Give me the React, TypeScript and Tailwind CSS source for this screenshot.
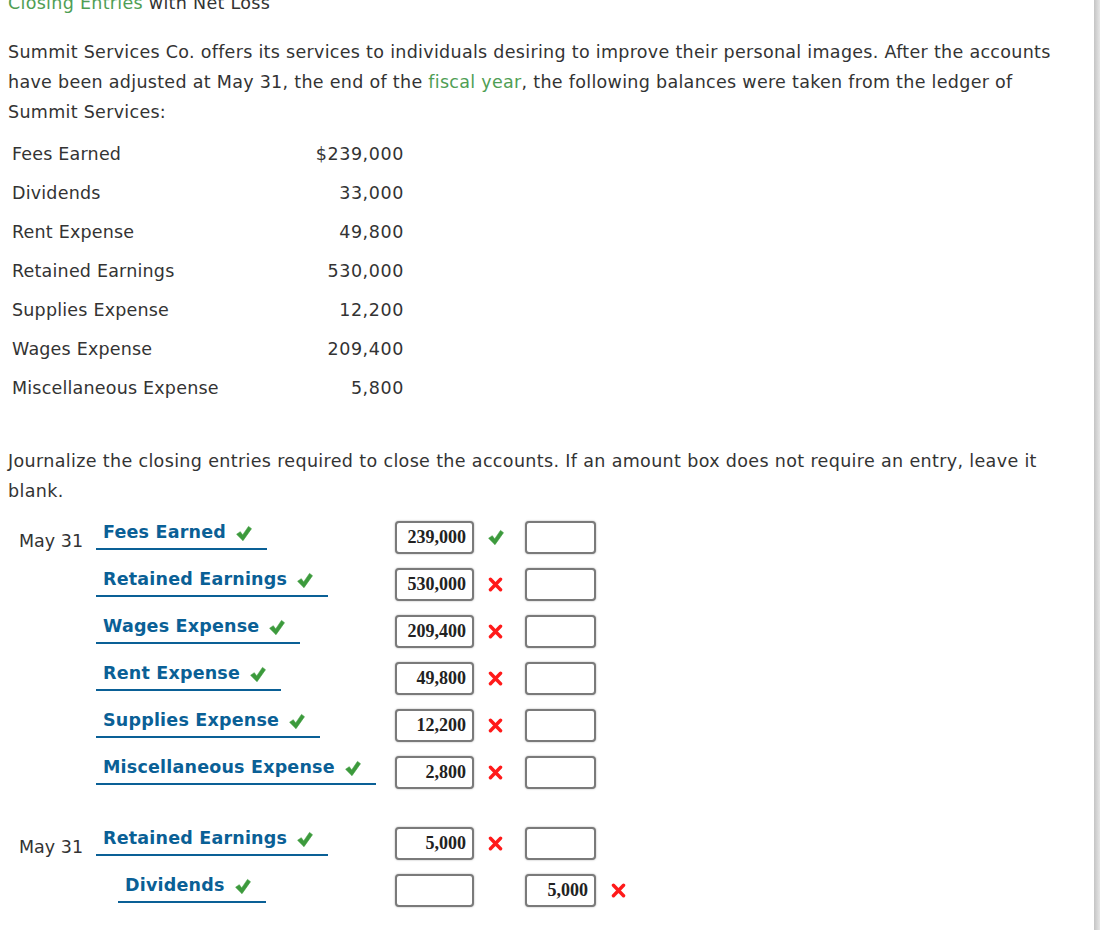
import React from "react";

const ledger: [string, string][] = [
  ["Fees Earned", "$239,000"],
  ["Dividends", "33,000"],
  ["Rent Expense", "49,800"],
  ["Retained Earnings", "530,000"],
  ["Supplies Expense", "12,200"],
  ["Wages Expense", "209,400"],
  ["Miscellaneous Expense", "5,800"],
];

type Mark = "ok" | "bad" | null;

type Line = {
  date?: string;
  account: string;
  indent?: boolean;
  debit: string;
  debitMark: Mark;
  credit: string;
  creditMark: Mark;
};

const entryOne: Line[] = [
  { date: "May 31", account: "Fees Earned", debit: "239,000", debitMark: "ok", credit: "", creditMark: null },
  { account: "Retained Earnings", debit: "530,000", debitMark: "bad", credit: "", creditMark: null },
  { account: "Wages Expense", debit: "209,400", debitMark: "bad", credit: "", creditMark: null },
  { account: "Rent Expense", debit: "49,800", debitMark: "bad", credit: "", creditMark: null },
  { account: "Supplies Expense", debit: "12,200", debitMark: "bad", credit: "", creditMark: null },
  { account: "Miscellaneous Expense", debit: "2,800", debitMark: "bad", credit: "", creditMark: null },
];

const entryTwo: Line[] = [
  { date: "May 31", account: "Retained Earnings", debit: "5,000", debitMark: "bad", credit: "", creditMark: null },
  { account: "Dividends", indent: true, debit: "", debitMark: null, credit: "5,000", creditMark: "bad" },
];

function Check({ className = "" }: { className?: string }) {
  return (
    <svg viewBox="0 0 16 16" className={`h-[17px] w-[16px] ${className}`}>
      <path
        d="M0.6 8.8 L4.3 6.2 L6.7 9.4 L12.5 0.9 L15.5 3.2 L7.0 15.2 Z"
        fill="#3c9a3c"
        stroke="#3c9a3c"
        strokeWidth="0.6"
        strokeLinejoin="round"
      />
    </svg>
  );
}

function Cross() {
  return (
    <svg viewBox="0 0 16 16" className="h-[15px] w-[15px]">
      <path d="M2.6 2.4 L13.4 13.6 M13.4 2.4 L2.6 13.6" stroke="#ff1a1a" strokeWidth="3.6" strokeLinecap="round" />
    </svg>
  );
}

function Amount({ value, width }: { value: string; width: string }) {
  return (
    <div
      className={`${width} flex h-[33px] items-center justify-end rounded-[4px] border-2 border-[#7a7a7a] bg-white pr-[6px] text-[18px] font-bold text-[#222] shadow-[0_0_2px_rgba(0,0,0,0.35)]`}
      style={{ fontFamily: '"Liberation Serif", "Times New Roman", serif' }}
    >
      {value}
    </div>
  );
}

function MarkSlot({ mark }: { mark: Mark }) {
  if (mark === "ok") return <Check />;
  if (mark === "bad") return <Cross />;
  return null;
}

function JournalRow({ line }: { line: Line }) {
  return (
    <div className="flex h-[47px] items-start">
      <div className="w-[88px] pl-[11px] pt-[5px] text-[17.5px] leading-[30px] text-[#333]">{line.date ?? ""}</div>
      <div className={`w-[299px] ${line.indent ? "pl-[22px]" : ""}`}>
        <div className="-mt-[4px] inline-flex items-center border-b-2 border-[#0a6096] pb-[2px] pl-[7px] pr-[15px]">
          <span className="text-[17.5px] font-bold leading-[28px] tracking-[0.2px] text-[#0a6096]">{line.account}</span>
          <Check className="ml-[10px] mt-[2px]" />
        </div>
      </div>
      <Amount value={line.debit} width="w-[79px]" />
      <div className="flex h-[33px] w-[51px] items-center pl-[14px]">
        <MarkSlot mark={line.debitMark} />
      </div>
      <Amount value={line.credit} width="w-[71px]" />
      <div className="flex h-[33px] items-center pl-[15px]">
        <MarkSlot mark={line.creditMark} />
      </div>
    </div>
  );
}

export default function App() {
  return (
    <div
      className="flex h-[930px] w-[1100px] overflow-hidden bg-white text-[#333]"
      style={{ fontFamily: '"DejaVu Sans", Verdana, sans-serif' }}
    >
      <main className="flex-1 pl-[8px]">
        <div className="-mt-[12px] whitespace-nowrap text-[17.5px] leading-[30px] tracking-[0.3px]">
          <span className="text-[#4f9e55]">Closing Entries</span> with Net Loss
        </div>

        <p className="mt-[19px] whitespace-nowrap text-[17.5px] leading-[30px] tracking-[0.3px]">
          Summit Services Co. offers its services to individuals desiring to improve their personal images. After the accounts
          <br />
          have been adjusted at May 31, the end of the <span className="text-[#4f9e55]">fiscal year</span>, the following
          balances were taken from the ledger of
          <br />
          Summit Services:
        </p>

        <div className="mt-[8px] w-[396px]">
          {ledger.map(([name, amt]) => (
            <div key={name} className="flex h-[39px] items-center justify-between pl-[4px] text-[17.5px]">
              <span className="tracking-[0.2px]">{name}</span>
              <span className="tracking-[0.6px]">{amt}</span>
            </div>
          ))}
        </div>

        <p className="mt-[38px] whitespace-nowrap text-[17.5px] leading-[30px] tracking-[0.35px]">
          Journalize the closing entries required to close the accounts. If an amount box does not require an entry, leave it
          <br />
          blank.
        </p>

        <div className="mt-[15px]">
          {entryOne.map((l) => (
            <JournalRow key={l.account} line={l} />
          ))}
        </div>
        <div className="mt-[24px]">
          {entryTwo.map((l) => (
            <JournalRow key={l.account} line={l} />
          ))}
        </div>
      </main>
      <div className="w-[6px] shrink-0 bg-gradient-to-r from-[#c4c4c4] to-[#e6e6e6]" />
    </div>
  );
}
